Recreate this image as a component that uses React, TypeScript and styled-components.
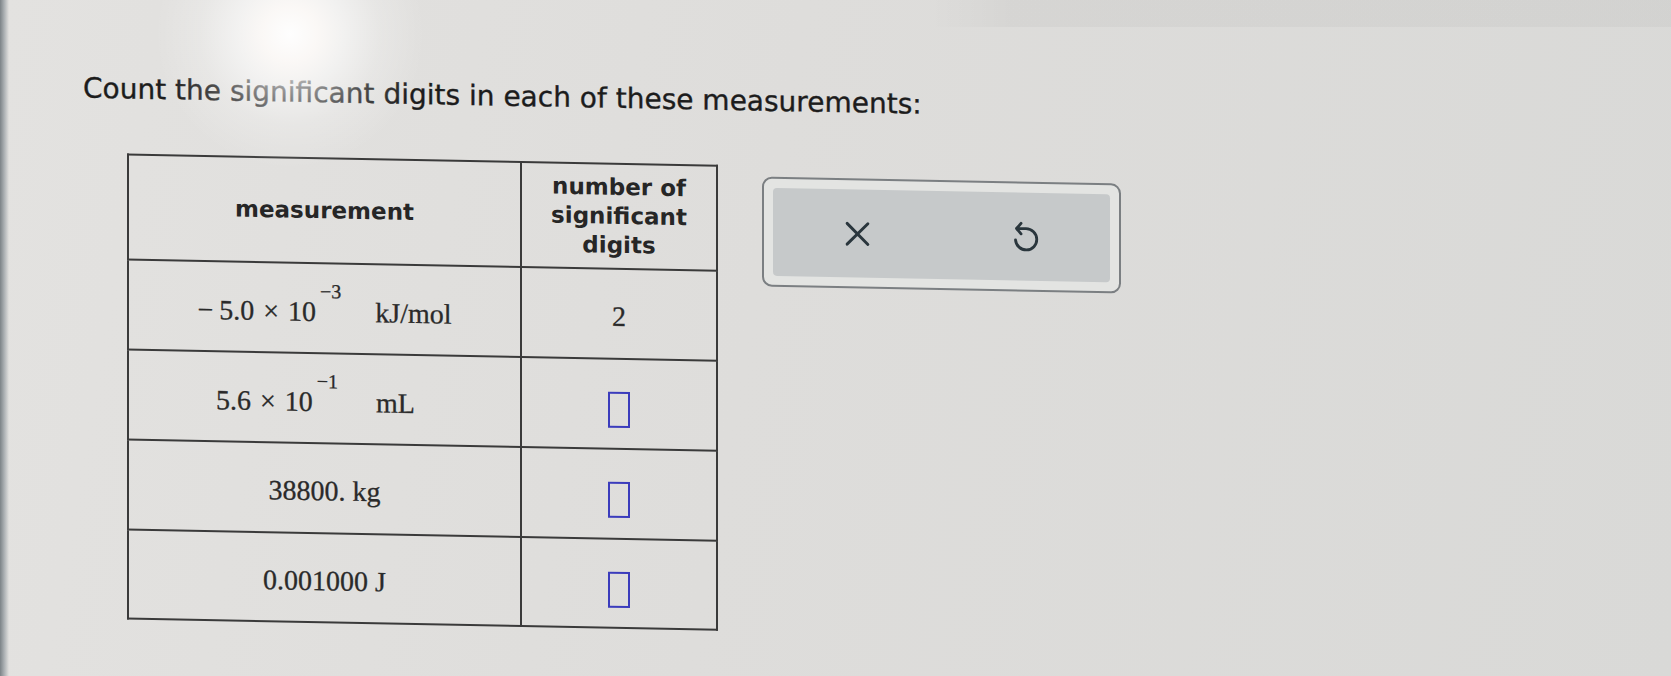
import React from "react";
import styled, { createGlobalStyle } from "styled-components";

const GlobalStyle = createGlobalStyle`
  html, body {
    margin: 0;
    padding: 0;
  }
  body {
    width: 1671px;
    height: 676px;
    overflow: hidden;
    font-family: "DejaVu Sans", Verdana, sans-serif;
    background-color: #dddcda;
    background-image:
      linear-gradient(to right, #7c8387 0px, #a9aeb1 4px, rgba(220,220,218,0) 9px),
      linear-gradient(to right, rgba(0,0,0,0) 0px, rgba(0,0,0,0.03) 80px),
      linear-gradient(100deg, #e3e2e0 0%, #dedddb 45%, #d9d9d7 100%);
    background-repeat: no-repeat;
    background-size: 10px 100%, 760px 27px, 100% 100%;
    background-position: 0 0, 930px 0, 0 0;
  }
`;

const Screen = styled.div`
  position: relative;
  width: 1671px;
  height: 676px;
`;

const Glare = styled.div`
  position: absolute;
  inset: 0;
  pointer-events: none;
  background: radial-gradient(
    circle at 290px 34px,
    rgba(255, 255, 255, 0.97) 0px,
    rgba(255, 252, 250, 0.85) 28px,
    rgba(255, 255, 255, 0.55) 55px,
    rgba(255, 255, 255, 0.22) 90px,
    rgba(255, 255, 255, 0) 135px
  );
`;

const Stage = styled.main`
  padding: 70px 0 0 83px;
  transform: skewY(1.1deg);
  transform-origin: 0 0;
`;

const Title = styled.h1`
  margin: 0;
  font-family: "DejaVu Sans", Verdana, sans-serif;
  font-weight: 400;
  font-size: 28px;
  line-height: 34px;
  color: #1c1c1c;
  -webkit-text-stroke: 0.35px #1c1c1c;
`;

const Content = styled.div`
  display: flex;
  align-items: flex-start;
  gap: 44px;
  margin: 47px 0 0 44px;
`;

const Table = styled.table`
  border-collapse: collapse;
  table-layout: fixed;
  width: 589px;
  border: 2px solid #3a3a3a;
`;

const HeadCell = styled.th`
  height: 103px;
  padding: 0 8px;
  border: 2px solid #3a3a3a;
  font-family: "DejaVu Sans", Verdana, sans-serif;
  font-weight: 700;
  font-size: 23px;
  line-height: 29px;
  color: #262626;
  text-align: center;
  vertical-align: middle;
`;

const Cell = styled.td<{ $h: number }>`
  height: ${(p) => p.$h}px;
  padding: 6px 0 0 0;
  box-sizing: border-box;
  border: 2px solid #3a3a3a;
  font-family: "Liberation Serif", "Times New Roman", serif;
  font-size: 28px;
  line-height: 40px;
  color: #2a2a2a;
  -webkit-text-stroke: 0.3px #2a2a2a;
  text-align: center;
  vertical-align: middle;
  white-space: nowrap;
`;

const Expr = styled.span<{ $pad?: number }>`
  display: inline-block;
  padding-right: ${(p) => p.$pad ?? 0}px;
`;

const Minus = styled.span`
  margin-right: 6px;
`;

const Times = styled.span`
  margin: 0 9px;
`;

const Sup = styled.span`
  font-size: 20px;
  line-height: 0;
  vertical-align: 23px;
  margin-left: 4px;
`;

const Unit = styled.span<{ $gap?: number }>`
  margin-left: ${(p) => p.$gap ?? 34}px;
`;

const AnswerBox = styled.span`
  display: inline-block;
  box-sizing: border-box;
  width: 22px;
  height: 36px;
  margin-top: 3px;
  border: 2.5px solid #3b3cbc;
  vertical-align: middle;
`;

const Panel = styled.div`
  box-sizing: border-box;
  width: 359px;
  height: 110px;
  margin-top: 11px;
  padding: 9px;
  border: 2px solid #7b7f82;
  border-radius: 10px;
  background: #e3e4e2;
`;

const ButtonBar = styled.div`
  display: flex;
  height: 100%;
  border-radius: 4px;
  background: #c6c9ca;
`;

const IconButton = styled.button`
  flex: 1;
  display: flex;
  align-items: center;
  justify-content: center;
  padding: 0;
  border: none;
  background: transparent;
  color: #2a363d;
  cursor: pointer;
`;

const CloseIcon = () => (
  <svg width="27" height="27" viewBox="0 0 26 26" fill="none">
    <path d="M3 3 L23 23 M23 3 L3 23" stroke="currentColor" strokeWidth="2.8" strokeLinecap="round" />
  </svg>
);

const UndoIcon = () => (
  <svg width="34" height="37" viewBox="0 0 24 26" fill="none">
    <path
      d="M8.5 3.3 L5.3 7 L8.5 10.7 M5.3 7 H12 A7.5 7.5 0 1 1 4.6 15"
      stroke="currentColor"
      strokeWidth="2"
      strokeLinecap="round"
      strokeLinejoin="round"
    />
  </svg>
);

export default function App() {
  return (
    <Screen>
      <GlobalStyle />
      <Stage>
        <Title>Count the significant digits in each of these measurements:</Title>
        <Content>
          <Table>
            <colgroup>
              <col style={{ width: 393 }} />
              <col style={{ width: 196 }} />
            </colgroup>
            <thead>
              <tr>
                <HeadCell>measurement</HeadCell>
                <HeadCell>
                  number of
                  <br />
                  significant
                  <br />
                  digits
                </HeadCell>
              </tr>
            </thead>
            <tbody>
              <tr>
                <Cell $h={90}>
                  <Expr>
                    <Minus>−</Minus>5.0<Times>×</Times>10<Sup>−3</Sup>
                    <Unit>kJ/mol</Unit>
                  </Expr>
                </Cell>
                <Cell $h={90}>2</Cell>
              </tr>
              <tr>
                <Cell $h={90}>
                  <Expr $pad={18}>
                    5.6<Times>×</Times>10<Sup>−1</Sup>
                    <Unit $gap={38}>mL</Unit>
                  </Expr>
                </Cell>
                <Cell $h={90}>
                  <AnswerBox />
                </Cell>
              </tr>
              <tr>
                <Cell $h={90}>38800.&nbsp;kg</Cell>
                <Cell $h={90}>
                  <AnswerBox />
                </Cell>
              </tr>
              <tr>
                <Cell $h={89}>0.001000&nbsp;J</Cell>
                <Cell $h={89}>
                  <AnswerBox />
                </Cell>
              </tr>
            </tbody>
          </Table>
          <Panel>
            <ButtonBar>
              <IconButton aria-label="Clear">
                <CloseIcon />
              </IconButton>
              <IconButton aria-label="Undo">
                <UndoIcon />
              </IconButton>
            </ButtonBar>
          </Panel>
        </Content>
      </Stage>
      <Glare />
    </Screen>
  );
}
